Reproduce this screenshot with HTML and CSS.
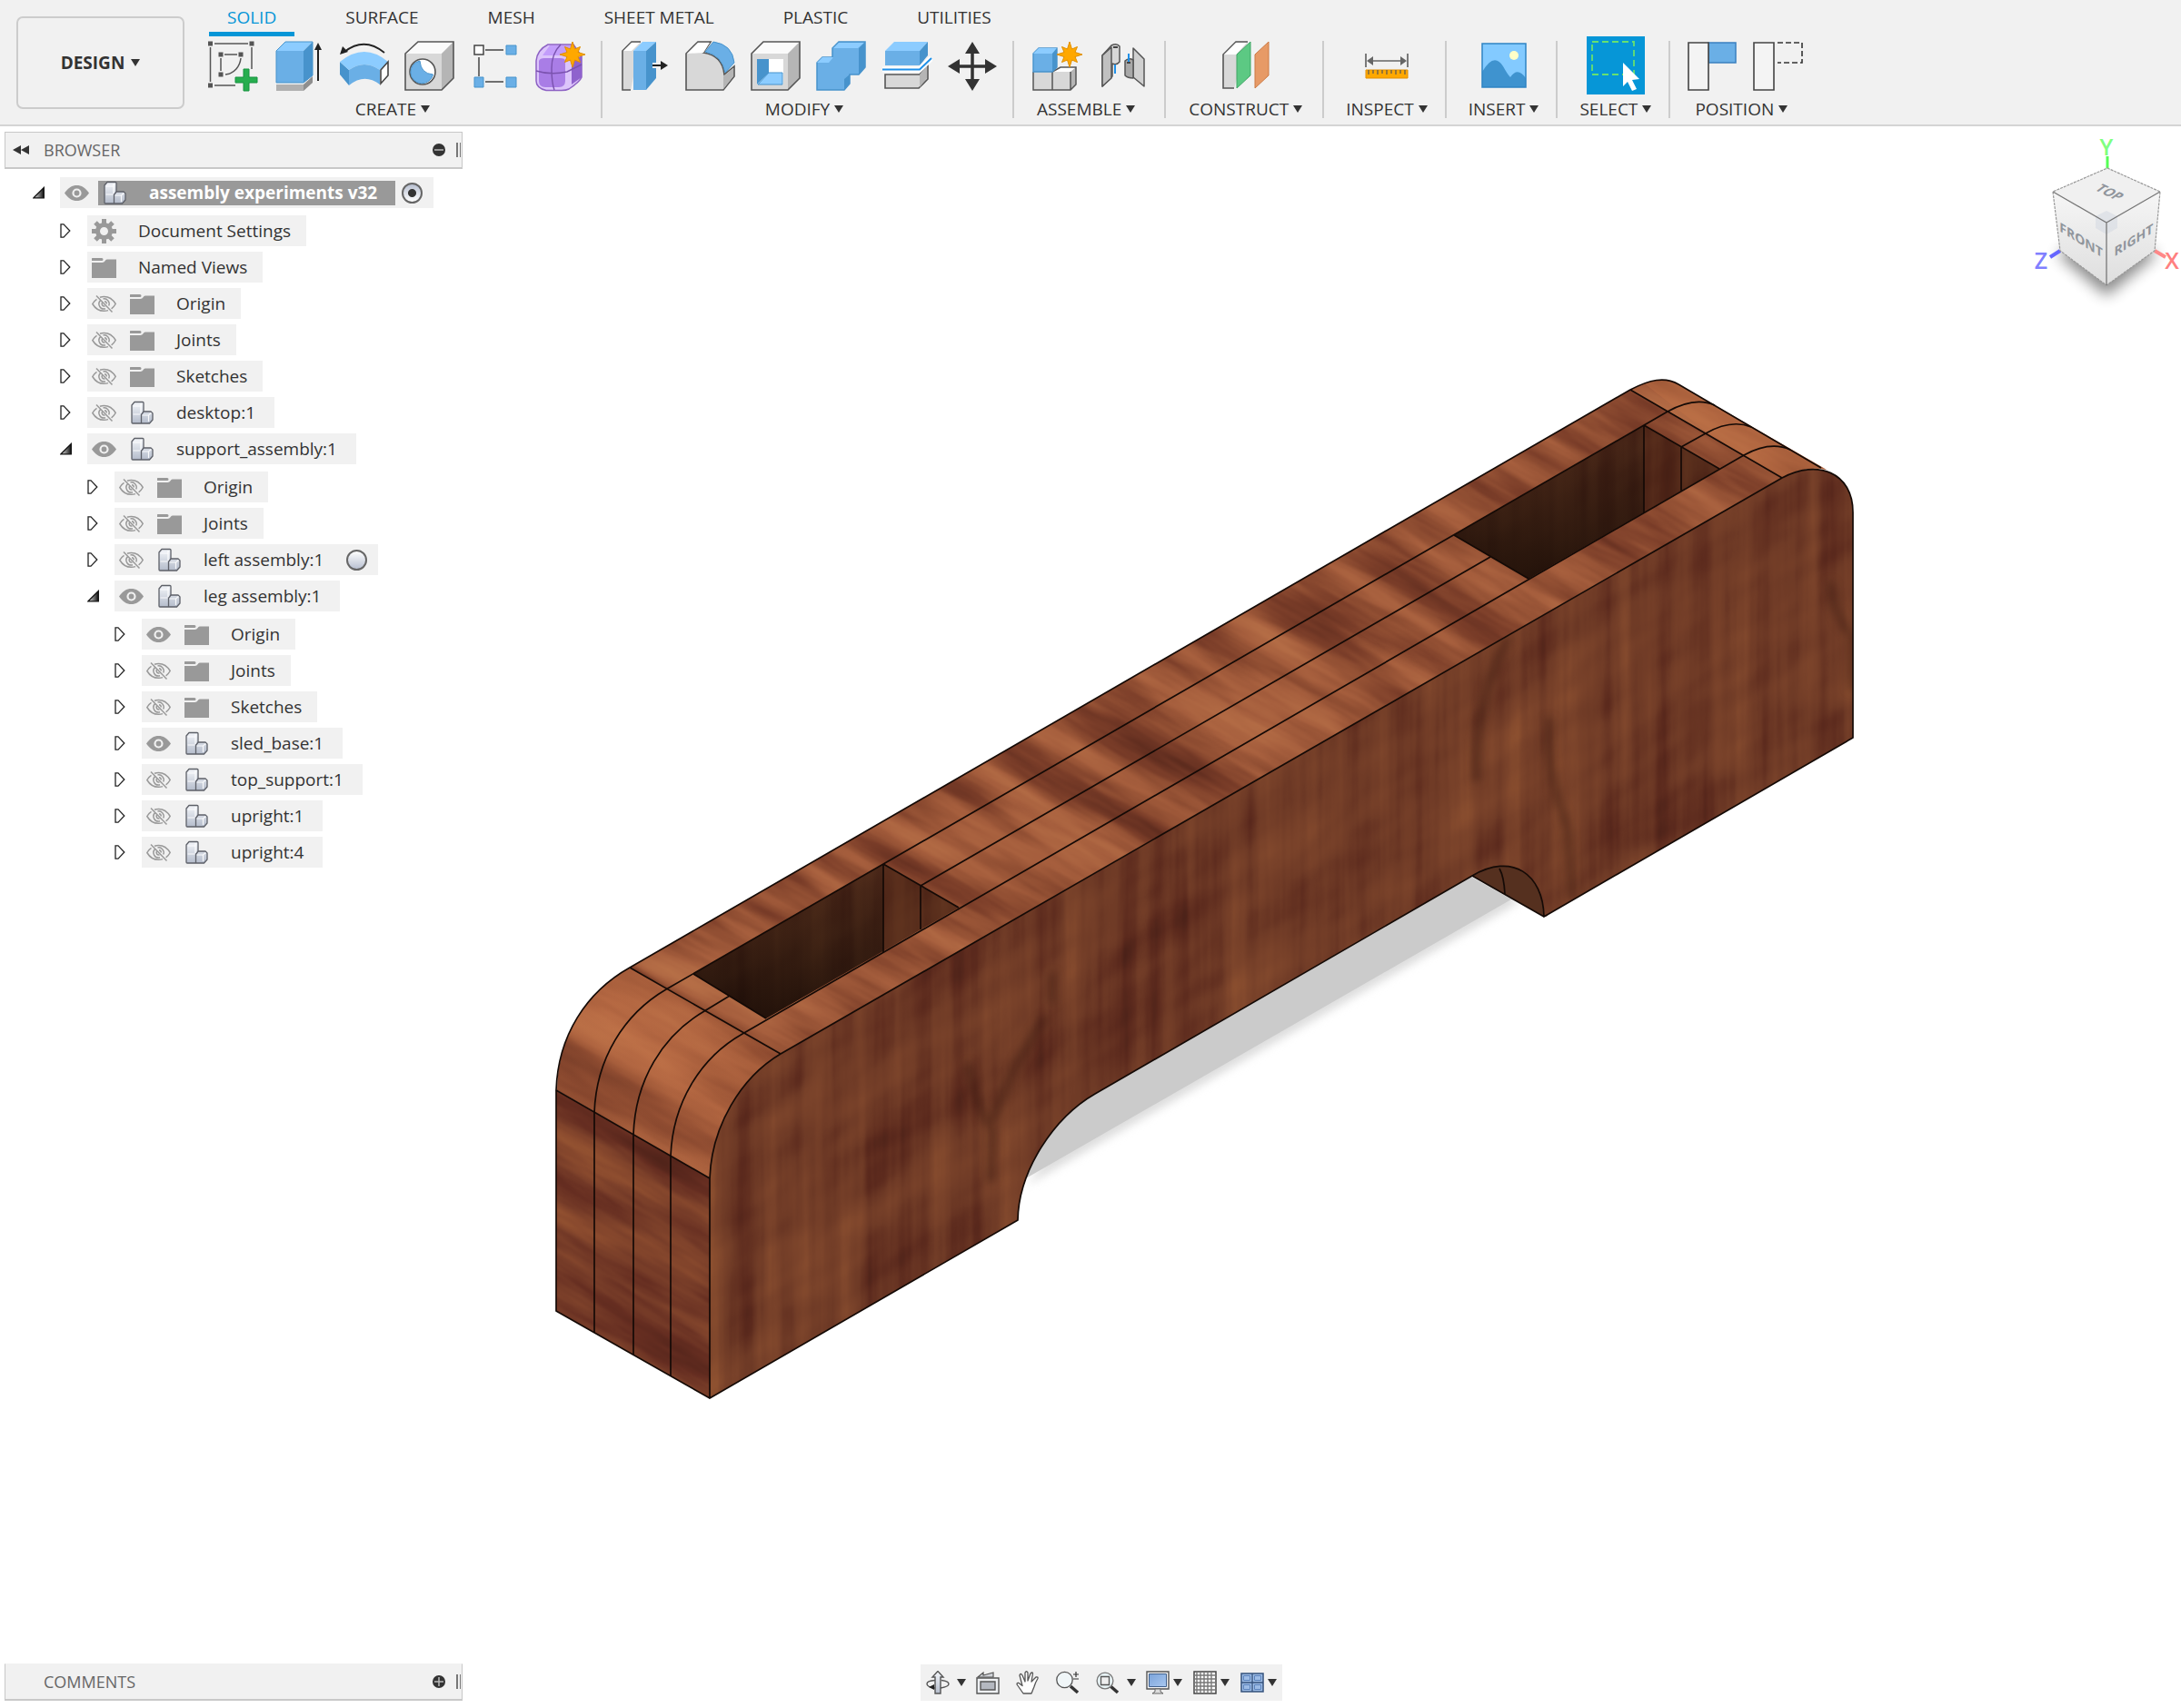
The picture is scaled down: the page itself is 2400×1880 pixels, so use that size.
FILE: index.html
```html
<!DOCTYPE html>
<html lang="en">
<head>
<meta charset="utf-8">
<title>assembly experiments v32</title>
<link rel="stylesheet" href="styles.css">
</head>
<body>
<svg class="defs" aria-hidden="true">
  <defs>
    <linearGradient id="steel" x1="0" y1="0" x2="0" y2="1"><stop offset="0" stop-color="#f4f6fa"/><stop offset="1" stop-color="#b4bccb"/></linearGradient>
    <linearGradient id="ink" x1="0" y1="0" x2="1" y2="0"><stop offset="0" stop-color="#eee"/><stop offset="1" stop-color="#111"/></linearGradient>
    <linearGradient id="sky" x1="0" y1="0" x2="1" y2="1"><stop offset="0" stop-color="#7ba3da"/><stop offset="1" stop-color="#a9c8f0"/></linearGradient>
    <symbol id="eye" viewBox="0 0 27 27"><path d="M0 13.500C4 7.500 8.500 5 13.500 5s9.500 2.500 13.500 8.500c-4 6-8.500 8.500-13.500 8.500S4 19.500 0 13.500z" fill="#999"/><circle cx="13.500" cy="13.500" r="4" fill="none" stroke="#f0f0f0" stroke-width="2.200"/></symbol>
    <symbol id="eye-off" viewBox="0 0 27 27"><g fill="none" stroke="#999" stroke-width="1.500"><path d="M5.500 8.300C3.500 9.600 2 11.400.800 13.500 4 19 8.500 21.300 13.500 21.300q2.400 0 4.500-.700M9 6.300q2.200-.900 4.500-.900c5 0 9.500 2.600 12.700 8.100q-1.900 3.400-4.600 5.300"/><path d="M9.600 9.600a5.500 5.500 0 0 0 5.400 9.200M12.500 8a5.500 5.500 0 0 1 6.200 7.500M11.500 12a2.700 2.700 0 0 0 3 4M14 10.800a2.700 2.700 0 0 1 2.300 2.600"/><path d="M5 4.500l17.500 18"/></g></symbol>
    <symbol id="folder" viewBox="0 0 27 27"><path d="M0 3.500q0-.500.500-.500H11q1.500 0 1.500 1.500T11 6H0zM0 8h11.500q2 0 3-1.800T17 4.500h10V25H0z" fill="#999"/></symbol>
    <symbol id="part" viewBox="0 0 27 27"><g stroke="#5d6068" stroke-width="1.300" stroke-linejoin="round" fill="url(#steel)"><path d="M2 5l3-3.500h9q1 0 1 1V12h8l2 2v7l-3.500 4H3q-1 0-1-1z"/><path d="M12.500 25V15.500L15 12" fill="none"/></g><path d="M3.500 6h8.500V3M3.500 15h8M20.500 16v7M13.500 16h7l3-2.500M12 6v8" fill="none" stroke="#fff" stroke-width="1.200" opacity=".9"/></symbol>
    <symbol id="gear" viewBox="0 0 27 27"><circle cx="13.500" cy="13.500" r="7" fill="none" stroke="#999" stroke-width="5"/><path d="M13.500 0v6M13.500 21v6M0 13.500h6M21 13.500h6M4 4l4.500 4.500M18.500 18.500L23 23M4 23l4.500-4.500M18.500 8.500L23 4" stroke="#999" stroke-width="5"/></symbol>
    <symbol id="closed" viewBox="0 0 14 16"><path d="M1 .800h3l6.800 7.200L4 15.200H1z" fill="#fff" stroke="#222" stroke-width="1.300"/></symbol>
    <symbol id="open" viewBox="0 0 14 14"><path d="M1 12.800L12.300 1.500v11.300z" fill="url(#ink)" stroke="#111" stroke-width="1.300"/></symbol>
    <symbol id="caret" viewBox="0 0 10 8"><path d="M0 0h10L5 8z" fill="#333"/></symbol>
    <symbol id="spark" viewBox="-14 -14 28 28"><path d="M0-14L2.500-6 8.500-8.500 6-2.500 14 0 6 2.500 8.500 8.500 2.500 6 0 14-2.500 6-8.500 8.500-6 2.500-14 0-6-2.500-8.500-8.500-2.500-6z" fill="#ffa800" stroke="#e08f00"/></symbol>
  </defs>
</svg>

<header class="toolbar">
  <button class="workspace">DESIGN <svg class="caret"><use href="#caret"/></svg></button>
  <div class="ribbon">
    <nav class="tabs" aria-label="Tool tabs">
      <a class="tab active" href="#solid">SOLID</a>
      <a class="tab" href="#surface">SURFACE</a>
      <a class="tab" href="#mesh">MESH</a>
      <a class="tab" href="#sheet">SHEET METAL</a>
      <a class="tab" href="#plastic">PLASTIC</a>
      <a class="tab" href="#utilities">UTILITIES</a>
    </nav>
    <div class="groups">
      <section class="group wide">
        <div class="tools">
          <button class="tool" aria-label="Create Sketch"><svg viewBox="0 0 56 56"><path d="M7 3h37M48 7v24M2.500 7v38M7 49h23M18 15h14M14 19v14M36 19C35 28 29 36 19 37" fill="none" stroke="#555" stroke-width="1.500"/><path d="M0 .500h5v5H0zM45.500.500h5v5h-5zM0 46.500h5v5H0zM11.500 12.500h5v5h-5zM33.500 12.500h5v5h-5zM11.500 34.500h5v5h-5z" fill="#555"/><path d="M39 31h6v9h9v6h-9v9h-6v-9h-9v-6h9z" fill="#27ae4f" stroke="#169241"/></svg></button>
          <button class="tool" aria-label="Extrude"><svg viewBox="0 0 56 56"><path d="M3 48h30v7H3z" fill="#b0b0b0"/><path d="M33 48l10-9v7l-10 9z" fill="#8e8e8e"/><path d="M3 11h30v35H3z" fill="#6aafe6"/><path d="M3 11L13 1h30L33 11z" fill="#8cccff"/><path d="M33 11L43 1v37l-10 8z" fill="#4793cc"/><path d="M3 11L13 1h30v37l-10 8H3z" fill="none" stroke="#4793cc"/><path d="M49 8v36" stroke="#222" stroke-width="2"/><path d="M49 2l4 8h-8z" fill="#222"/></svg></button>
          <button class="tool" aria-label="Revolve"><svg viewBox="0 0 56 56"><path d="M1 23l10 9v17L1 37z" fill="#4793cc"/><path d="M1 23Q28 1 54 23l-9 9Q28 20 11 32z" fill="#8cccff"/><path d="M11 32Q28 20 45 32v16Q28 35 11 49z" fill="#6aafe6"/><path d="M46 32l8-9v15l-8 9z" fill="#fff" stroke="#444" stroke-width="1.600"/><path d="M50 13Q28-5 6 12" fill="none" stroke="#222" stroke-width="1.800"/><path d="M1 15l3-9 6 6z" fill="#222"/></svg></button>
          <button class="tool" aria-label="Hole"><svg viewBox="0 0 56 56"><path d="M1 14h40v40H1z" fill="#d8d8d8"/><path d="M1 14L15 1h39L41 14z" fill="#fafafa"/><path d="M41 14L54 1v40L41 54z" fill="#b5b5b5"/><path d="M1 14L15 1h39v40L41 54H1z" fill="none" stroke="#555" stroke-width="1.600"/><circle cx="20" cy="34" r="14" fill="#fff" stroke="#555" stroke-width="1.600"/><path d="M17 22a12.500 12.500 0 1 0 14.500 15Q18 36 17 22z" fill="#6aafe6" stroke="#4793cc"/></svg></button>
          <button class="tool" aria-label="Rectangular Pattern"><svg viewBox="0 0 56 56"><path d="M17 10h20M10 18v21M17 45h20" stroke="#444" stroke-width="1.500"/><path d="M5 5h10v10H5z" fill="#fff" stroke="#444" stroke-width="1.500"/><path d="M40 5h11v10H40zM5 40h10v11H5zM40 40h11v11H40z" fill="#6aafe6" stroke="#4793cc"/></svg></button>
          <button class="tool" aria-label="Create Form"><svg viewBox="0 0 56 56"><path d="M1 22Q2 10 14 4h28l9 13v23q-2 5-14 13-3 1.500-8 1.500H12Q1 52 1 44z" fill="#dcc4fb" stroke="#8d62c4" stroke-width="1.500"/><path d="M4 22q1-3 6-3h17q6 0 6 3v22q0 7-7 7H11q-7 0-7-7z" fill="#a97de6"/><path d="M16 5h24l-7 11H8z" fill="#c39dfb"/><path d="M40 24l11-8v24l-11 8z" fill="#8f62cd"/><path d="M1 33q16 5 34 1l16-8M28 4Q18 14 18 30t3 24" fill="none" stroke="#7a52ae" stroke-width="1.400"/><use href="#spark" x="27" y="1" width="28" height="28"/></svg></button>
        </div>
        <button class="label">CREATE <svg class="caret"><use href="#caret"/></svg></button>
      </section>
      <section class="group wide">
        <div class="tools">
          <button class="tool" aria-label="Press Pull"><svg viewBox="0 0 56 56"><path d="M12 54H3V11L13 1h10" fill="#dadada" stroke="#555" stroke-width="1.600"/><path d="M4 11L13 2h9L13 11z" fill="#fff"/><path d="M15 11h14v43H15z" fill="#6aafe6"/><path d="M15 11L25 1h15L29 11z" fill="#8cccff"/><path d="M29 11L40 1v40L29 54z" fill="#4793cc"/><path d="M36 27h10" stroke="#f0f0f0" stroke-width="6"/><path d="M36 27h10" stroke="#222" stroke-width="2"/><path d="M45 22l8 5-8 5z" fill="#222"/></svg></button>
          <button class="tool" aria-label="Fillet"><svg viewBox="0 0 56 56"><path d="M1 14L14 1h14l-8 12Q41 16 43 37l11-9v11L42 54H1z" fill="#d8d8d8" stroke="#555" stroke-width="1.600"/><path d="M2 14L14 2h13l-7 11z" fill="#fff"/><path d="M42 39l11-9v9L42 53z" fill="#b5b5b5"/><path d="M22 12L31 1Q52 4 54 24L44 35Q41 16 22 12z" fill="#6aafe6" stroke="#4793cc"/></svg></button>
          <button class="tool" aria-label="Shell"><svg viewBox="0 0 56 56"><path d="M1 14h40v40H1z" fill="#d8d8d8"/><path d="M1 14L14 1h40L41 14z" fill="#fafafa"/><path d="M41 14L54 1v40L41 54z" fill="#b5b5b5"/><path d="M1 14L14 1h40v40L41 54H1z" fill="none" stroke="#555" stroke-width="1.600"/><path d="M7 20h29v28H7z" fill="#fff"/><path d="M7 20h13v15L7 48z" fill="#4793cc"/><path d="M8 48l12-13h15v13z" fill="#8cccff" stroke="#4793cc"/></svg></button>
          <button class="tool" aria-label="Combine"><svg viewBox="0 0 56 56"><path d="M1 24l6-6h11V8l7-7h29v28l-7 8H37v10l-6 7H1z" fill="#6aafe6" stroke="#4793cc" stroke-width="1.500"/><path d="M1 24l6-6h12l-5 6zM19 8l6-6h28l-7 6z" fill="#8cccff"/><path d="M47 8l7-7v28l-7 8zM31 42l6-5v10l-6 7z" fill="#4793cc"/></svg></button>
          <button class="tool" aria-label="Split Body"><svg viewBox="0 0 56 56"><path d="M4 37h38l9-11v16L41 52H4z" fill="#d8d8d8" stroke="#555" stroke-width="1.600"/><path d="M42 37l8-10v14l-8 10z" fill="#b5b5b5"/><path d="M4 11h38v16H4z" fill="#6aafe6"/><path d="M4 11L14 1h37l-9 10z" fill="#8cccff"/><path d="M42 11l9-10v15l-9 11z" fill="#4793cc"/><path d="M1 31.500h41L55 19" fill="none" stroke="#fff" stroke-width="6"/><path d="M1 31.500h41L55 19" fill="none" stroke="#1e90e8" stroke-width="2"/></svg></button>
          <button class="tool" aria-label="Move"><svg viewBox="0 0 56 56"><path d="M28 8v40M8 28h40" stroke="#333" stroke-width="3.500"/><path d="M28 1l8 13H20zM28 55l8-13H20zM1 28l13-8v16zM55 28l-13-8v16z" fill="#333"/></svg></button>
        </div>
        <button class="label">MODIFY <svg class="caret"><use href="#caret"/></svg></button>
      </section>
      <section class="group wide">
        <div class="tools">
          <button class="tool" aria-label="New Component"><svg viewBox="0 0 56 56"><path d="M1 34h21v20H1zM22 34h20v20H22z" fill="#d8d8d8"/><path d="M22 34l8-5h18l-6 5z" fill="#fff"/><path d="M42 34l6-5v19l-6 6z" fill="#b5b5b5"/><path d="M1 34v20h41l6-6V29H31L22 34v20M42 34v20" fill="none" stroke="#555" stroke-width="1.500"/><path d="M1 14l6-6h20v21l-5 5H1z" fill="#6aafe6" stroke="#4793cc" stroke-width="1.400"/><path d="M1 14l6-6h20l-5 6z" fill="#8cccff"/><path d="M22 14l5-6v21l-5 5z" fill="#4793cc"/><use href="#spark" x="27" y="1" width="28" height="28"/></svg></button>
          <button class="tool" aria-label="Joint"><svg viewBox="0 0 56 56"><g stroke="#555" stroke-width="1.500" stroke-linejoin="round"><path d="M5 16L15 5q6-3 9 1v17q-3 4-8 2v14L5 50z" fill="#d8d8d8"/><path d="M5 16L15 7v34L5 50z" fill="#c0c0c0"/><path d="M39 8l12 12v30L39 40z" fill="#d0d0d0"/><path d="M30 22q4-4 9-1v20q-6 0-9-3z" fill="#a8a8a8"/></g><path d="M19 26v10M34 14v10" stroke="#1e90e8" stroke-width="2"/><path d="M17 7h5M32 24h4" stroke="#444" stroke-width="2"/></svg></button>
        </div>
        <button class="label">ASSEMBLE <svg class="caret"><use href="#caret"/></svg></button>
      </section>
      <section class="group">
        <div class="tools">
          <button class="tool" aria-label="Offset Plane"><svg viewBox="0 0 56 56"><path d="M15 52H3V15L17 1h13" fill="#d8d8d8" stroke="#555" stroke-width="1.600"/><path d="M4 15L17 2h12L17 15z" fill="#fff"/><path d="M18 15L33 1v37L18 52z" fill="#5cc983" stroke="#3fa565"/><path d="M38 15L53 1v37L38 52z" fill="#e79a66" stroke="#cc7a45"/></svg></button>
        </div>
        <button class="label">CONSTRUCT <svg class="caret"><use href="#caret"/></svg></button>
      </section>
      <section class="group compact">
        <div class="tools">
          <button class="tool" aria-label="Measure"><svg viewBox="0 0 56 56"><path d="M5 14v15M51 14v15M8 22h40" stroke="#666" stroke-width="1.700"/><path d="M6 22l7-5v10zM50 22l-7-5v10z" fill="#666"/><path d="M5 32h46v9H5z" fill="#ffa800" stroke="#e08f00"/><path d="M8 32v5M13 32v4M18 32v5M23 32v4M28 32v5M33 32v4M38 32v5M43 32v4M48 32v5" stroke="#555" stroke-width="1.200"/></svg></button>
        </div>
        <button class="label">INSPECT <svg class="caret"><use href="#caret"/></svg></button>
      </section>
      <section class="group compact">
        <div class="tools">
          <button class="tool" aria-label="Insert Image"><svg viewBox="0 0 56 56"><path d="M4 3h48v48H4z" fill="#83caff"/><path d="M4 34Q17 12 27 28q5 9 8 12 8-12 17 1v10H4z" fill="#3f93cf"/><path d="M4 3h48v48H4z" fill="none" stroke="#2f84c4" stroke-width="1.500"/><circle cx="39" cy="16" r="5" fill="#ffffc8"/></svg></button>
        </div>
        <button class="label">INSERT <svg class="caret"><use href="#caret"/></svg></button>
      </section>
      <section class="group compact">
        <div class="tools">
          <button class="tool selected" aria-label="Select"><svg viewBox="0 0 64 64"><path d="M6 6h46v36H6z" fill="none" stroke="#66e070" stroke-width="1.800" stroke-dasharray="7 4"/><path d="M40 29l18 18-8 1 5 10-5 2-5-10-5 5z" fill="#fff"/></svg></button>
        </div>
        <button class="label">SELECT <svg class="caret"><use href="#caret"/></svg></button>
      </section>
      <section class="group wide">
        <div class="tools">
          <button class="tool" aria-label="Capture Position"><svg viewBox="0 0 56 56"><path d="M23 2h30v22H23z" fill="#6aafe6" stroke="#3a80c0" stroke-width="1.500"/><path d="M1 2h22v52H1z" fill="#f4f4f4" stroke="#444" stroke-width="1.600"/></svg></button>
          <button class="tool" aria-label="Revert Position"><svg viewBox="0 0 56 56"><path d="M27 2h27v22H27" fill="none" stroke="#333" stroke-width="1.600" stroke-dasharray="6 3"/><path d="M1 2h22v52H1z" fill="#f4f4f4" stroke="#444" stroke-width="1.600"/></svg></button>
        </div>
        <button class="label">POSITION <svg class="caret"><use href="#caret"/></svg></button>
      </section>
    </div>
  </div>
</header>

<main class="viewport">
  <svg class="model" viewBox="0 139 2400 1741" aria-label="sled_base model">
    <defs>
      <filter id="woodFront" x="0" y="0" width="1" height="1" color-interpolation-filters="sRGB">
        <feTurbulence type="fractalNoise" baseFrequency="0.034 0.0014" numOctaves="4" seed="8" result="a"/>
        <feColorMatrix in="a" values="1 0 0 0 0 1 0 0 0 0 1 0 0 0 0 0 0 0 0 1" result="aa"/>
        <feTurbulence type="fractalNoise" baseFrequency="0.007 0.014" numOctaves="3" seed="21" result="b"/>
        <feColorMatrix in="b" values="1 0 0 0 0 1 0 0 0 0 1 0 0 0 0 0 0 0 0 1" result="bb"/>
        <feComposite in="aa" in2="bb" operator="arithmetic" k2=".62" k3=".5" k4="-.04"/>
        <feComponentTransfer><feFuncR type="table" tableValues=".20 .27 .36 .435 .49 .56 .62"/><feFuncG type="table" tableValues=".10 .12 .165 .23 .27 .32 .36"/><feFuncB type="table" tableValues=".07 .09 .115 .15 .17 .19 .21"/></feComponentTransfer>
      </filter>
      <filter id="woodTop" x="0" y="0" width="1" height="1" color-interpolation-filters="sRGB">
        <feTurbulence type="fractalNoise" baseFrequency="0.024 0.004" numOctaves="4" seed="5"/>
        <feColorMatrix values="1 0 0 0 0 1 0 0 0 0 1 0 0 0 0 0 0 0 0 1"/>
        <feComponentTransfer><feFuncR type="table" tableValues=".32 .40 .48 .57 .65 .70 .74"/><feFuncG type="table" tableValues=".15 .19 .24 .31 .37 .42 .46"/><feFuncB type="table" tableValues=".10 .13 .16 .20 .24 .27 .29"/></feComponentTransfer>
      </filter>
      <filter id="woodEnd" x="0" y="0" width="1" height="1" color-interpolation-filters="sRGB">
        <feTurbulence type="fractalNoise" baseFrequency="0.005 0.024" numOctaves="4" seed="14"/>
        <feColorMatrix values="1 0 0 0 0 1 0 0 0 0 1 0 0 0 0 0 0 0 0 1"/>
        <feComponentTransfer><feFuncR type="table" tableValues=".28 .34 .40 .47 .54 .60 .66"/><feFuncG type="table" tableValues=".13 .15 .18 .24 .29 .34 .38"/><feFuncB type="table" tableValues=".09 .11 .13 .16 .18 .20 .23"/></feComponentTransfer>
      </filter>
      <filter id="soft" x="-.5" y="-.5" width="2" height="2" color-interpolation-filters="sRGB"><feGaussianBlur stdDeviation="5"/></filter>
      <clipPath id="front"><path d="M781 1539V1297C783 1240 815 1186 859 1160L1961 526C2000 505 2039 520 2039 564V812L1699 1009C1698 962 1664 938 1620 964L1205 1204C1160 1230 1121 1288 1120 1343z"/></clipPath>
      <clipPath id="top"><path d="M693 1065L1794 429 1961 526 859 1160z"/></clipPath>
      <clipPath id="round"><path d="M613 1200C614 1140 645 1092 693 1065L859 1160C815 1186 783 1240 781 1297z"/></clipPath>
      <clipPath id="end"><path d="M612 1200L781 1297V1539L612 1443z"/></clipPath>
      <clipPath id="farRound"><path d="M1794 429C1815 418 1832 414 1847 423L2010 517Q1985 512 1961 526z"/></clipPath>
      <clipPath id="pocketA"><path d="M763 1072L972 951 1055 999 843 1121z"/></clipPath>
      <clipPath id="pocketB"><path d="M1600 589L1809 468 1892 516 1682 637z"/></clipPath>
      <linearGradient id="roundShade" x1="0" y1="1" x2="1" y2="0"><stop offset="0" stop-color="#6f3822" stop-opacity=".3"/><stop offset=".5" stop-color="#d07a4c" stop-opacity=".38"/><stop offset="1" stop-color="#b06038" stop-opacity=".15"/></linearGradient>
      <linearGradient id="deep" x1="0" y1="0" x2="0" y2="1"><stop offset="0" stop-color="#1c1108" stop-opacity=".35"/><stop offset=".75" stop-color="#150b05" stop-opacity=".78"/><stop offset="1" stop-color="#100602" stop-opacity=".88"/></linearGradient>
    </defs>
    <path d="M1131 1304L1672 993 1640 970 1200 1204z" fill="#ddd" filter="url(#soft)"/>
    <path d="M1115 1305L1663 990 1610 960 1190 1200z" fill="#cbcbcb"/>
    <path d="M1620 964Q1665 915 1704 960L1703 1008 1699 1009z" fill="#55301f"/>

    <g clip-path="url(#front)">
      <rect x="760" y="940" width="1300" height="1120" transform="skewY(-30)" filter="url(#woodFront)"/>
      <g fill="none" stroke="#3a1a10" stroke-opacity=".55" stroke-width="7" filter="url(#soft)">
        <path d="M1065 1170Q1075 1220 1092 1245L1090 1300M1092 1235Q1110 1180 1150 1120"/>
        <path d="M1705 790Q1700 850 1725 910L1730 990M1660 700Q1620 780 1625 860"/>
        <path d="M2014 640Q2018 680 2038 700V760M1158 1070V1105"/>
      </g>
    </g>
    <g clip-path="url(#top)"><rect x="-200" y="-20" width="1800" height="280" transform="matrix(.866 -.5 .866 .5 693 1060)" filter="url(#woodTop)"/></g>
    <g clip-path="url(#farRound)"><rect x="-50" y="-100" width="400" height="500" transform="matrix(.866 -.5 .866 .5 1780 440)" filter="url(#woodTop)"/><path d="M1794 410h230v130h-63z" fill="#c27245" opacity=".4"/></g>
    <g clip-path="url(#round)"><rect x="-200" y="0" width="600" height="500" transform="matrix(.7 -.72 .866 .5 593 1120)" filter="url(#woodTop)"/><path d="M600 1050h270v260H600z" fill="url(#roundShade)"/></g>
    <g clip-path="url(#end)"><rect x="600" y="820" width="190" height="300" transform="skewY(30)" filter="url(#woodEnd)"/></g>

    <g clip-path="url(#pocketA)">
      <rect x="740" y="1360" width="340" height="300" transform="skewY(-30)" filter="url(#woodFront)"/>
      <path d="M740 930h232v220H740z" fill="url(#deep)"/><path d="M972 940h90v90l-90 50z" fill="#2b130a" fill-opacity=".35"/>
    </g>
    <g clip-path="url(#pocketB)">
      <rect x="1580" y="1360" width="340" height="300" transform="skewY(-30)" filter="url(#woodFront)"/>
      <path d="M1580 450h229v215H1580z" fill="url(#deep)"/><path d="M1809 455h90v90l-90 50z" fill="#2b130a" fill-opacity=".35"/>
    </g>

    <g fill="none" stroke="#140a06" stroke-width="1.700" stroke-linejoin="round">
      <path d="M781 1539V1297C783 1240 815 1186 859 1160L1961 526C2000 505 2039 520 2039 564V812L1699 1009C1698 962 1664 938 1620 964L1205 1204C1160 1230 1121 1288 1120 1343z"/>
      <path d="M781 1539L612 1443V1200C614 1140 645 1092 693 1065L1794 429C1815 418 1832 414 1847 423L2004 515"/>
      <path d="M612 1200L781 1297M693 1065L859 1160M1794 429L1961 526"/>
      <path d="M654 1467V1225C656 1165 687 1116 733 1089L1835 453Q1865 436 1887 446"/>
      <path d="M697 1491V1249C699 1189 729 1140 775 1113L803 1096M1013 975L1640 613M1850 492L1877 477Q1905 461 1927 470"/>
      <path d="M738 1515V1273C740 1214 771 1164 817 1138L1919 501Q1948 485 1970 495"/>
      <path d="M763 1072L843 1121M972 951L1055 999M972 951V1048M1013 975V1023"/>
      <path d="M1600 589L1682 637M1809 468L1892 516M1809 468V565M1850 492V540"/>
      <path d="M1620 964L1699 1009M1650 956Q1655 965 1656 984"/>
    </g>
  </svg>

  <aside class="side">
    <div class="panel-head">
      <button class="collapse" aria-label="Collapse browser"><svg viewBox="0 0 18 10"><path d="M9 0v10L0 5zM18 0v10L9 5z" fill="#333"/></svg></button>
      <h2>BROWSER</h2>
      <button class="dot" aria-label="Minimize browser"><svg viewBox="0 0 14 14"><circle cx="7" cy="7" r="7" fill="#333"/><path d="M2 7h10" stroke="#bbb" stroke-width="1.500"/></svg></button>
      <span class="grip"></span>
    </div>
    <ul class="tree">
      <li>
        <div class="row"><button class="toggle" aria-label="Collapse"><svg class="expanded"><use href="#open"/></svg></button>
          <div class="chip root"><button class="eye" aria-label="Hide"><svg><use href="#eye"/></svg></button><span class="picked"><svg><use href="#part"/></svg><span class="name">assembly experiments v32</span></span><input type="radio" name="active" aria-label="Activate assembly experiments v32" checked></div></div>
        <ul>
          <li><div class="row"><button class="toggle" aria-label="Expand"><svg><use href="#closed"/></svg></button><div class="chip"><svg><use href="#gear"/></svg><span class="name">Document Settings</span></div></div></li>
          <li><div class="row"><button class="toggle" aria-label="Expand"><svg><use href="#closed"/></svg></button><div class="chip"><svg><use href="#folder"/></svg><span class="name">Named Views</span></div></div></li>
          <li><div class="row"><button class="toggle" aria-label="Expand"><svg><use href="#closed"/></svg></button><div class="chip"><button class="eye" aria-label="Show"><svg><use href="#eye-off"/></svg></button><svg><use href="#folder"/></svg><span class="name">Origin</span></div></div></li>
          <li><div class="row"><button class="toggle" aria-label="Expand"><svg><use href="#closed"/></svg></button><div class="chip"><button class="eye" aria-label="Show"><svg><use href="#eye-off"/></svg></button><svg><use href="#folder"/></svg><span class="name">Joints</span></div></div></li>
          <li><div class="row"><button class="toggle" aria-label="Expand"><svg><use href="#closed"/></svg></button><div class="chip"><button class="eye" aria-label="Show"><svg><use href="#eye-off"/></svg></button><svg><use href="#folder"/></svg><span class="name">Sketches</span></div></div></li>
          <li><div class="row"><button class="toggle" aria-label="Expand"><svg><use href="#closed"/></svg></button><div class="chip part"><button class="eye" aria-label="Show"><svg><use href="#eye-off"/></svg></button><svg><use href="#part"/></svg><span class="name">desktop:1</span></div></div></li>
          <li>
            <div class="row"><button class="toggle" aria-label="Collapse"><svg class="expanded"><use href="#open"/></svg></button><div class="chip part"><button class="eye" aria-label="Hide"><svg><use href="#eye"/></svg></button><svg><use href="#part"/></svg><span class="name">support_assembly:1</span></div></div>
            <ul>
              <li><div class="row"><button class="toggle" aria-label="Expand"><svg><use href="#closed"/></svg></button><div class="chip"><button class="eye" aria-label="Show"><svg><use href="#eye-off"/></svg></button><svg><use href="#folder"/></svg><span class="name">Origin</span></div></div></li>
              <li><div class="row"><button class="toggle" aria-label="Expand"><svg><use href="#closed"/></svg></button><div class="chip"><button class="eye" aria-label="Show"><svg><use href="#eye-off"/></svg></button><svg><use href="#folder"/></svg><span class="name">Joints</span></div></div></li>
              <li><div class="row"><button class="toggle" aria-label="Expand"><svg><use href="#closed"/></svg></button><div class="chip activatable"><button class="eye" aria-label="Show"><svg><use href="#eye-off"/></svg></button><svg><use href="#part"/></svg><span class="name">left assembly:1</span><input type="radio" name="active" aria-label="Activate left assembly:1"></div></div></li>
              <li>
                <div class="row"><button class="toggle" aria-label="Collapse"><svg class="expanded"><use href="#open"/></svg></button><div class="chip part"><button class="eye" aria-label="Hide"><svg><use href="#eye"/></svg></button><svg><use href="#part"/></svg><span class="name">leg assembly:1</span></div></div>
                <ul>
                  <li><div class="row"><button class="toggle" aria-label="Expand"><svg><use href="#closed"/></svg></button><div class="chip"><button class="eye" aria-label="Hide"><svg><use href="#eye"/></svg></button><svg><use href="#folder"/></svg><span class="name">Origin</span></div></div></li>
                  <li><div class="row"><button class="toggle" aria-label="Expand"><svg><use href="#closed"/></svg></button><div class="chip"><button class="eye" aria-label="Show"><svg><use href="#eye-off"/></svg></button><svg><use href="#folder"/></svg><span class="name">Joints</span></div></div></li>
                  <li><div class="row"><button class="toggle" aria-label="Expand"><svg><use href="#closed"/></svg></button><div class="chip"><button class="eye" aria-label="Show"><svg><use href="#eye-off"/></svg></button><svg><use href="#folder"/></svg><span class="name">Sketches</span></div></div></li>
                  <li><div class="row"><button class="toggle" aria-label="Expand"><svg><use href="#closed"/></svg></button><div class="chip part"><button class="eye" aria-label="Hide"><svg><use href="#eye"/></svg></button><svg><use href="#part"/></svg><span class="name">sled_base:1</span></div></div></li>
                  <li><div class="row"><button class="toggle" aria-label="Expand"><svg><use href="#closed"/></svg></button><div class="chip part"><button class="eye" aria-label="Show"><svg><use href="#eye-off"/></svg></button><svg><use href="#part"/></svg><span class="name">top_support:1</span></div></div></li>
                  <li><div class="row"><button class="toggle" aria-label="Expand"><svg><use href="#closed"/></svg></button><div class="chip part"><button class="eye" aria-label="Show"><svg><use href="#eye-off"/></svg></button><svg><use href="#part"/></svg><span class="name">upright:1</span></div></div></li>
                  <li><div class="row"><button class="toggle" aria-label="Expand"><svg><use href="#closed"/></svg></button><div class="chip part"><button class="eye" aria-label="Show"><svg><use href="#eye-off"/></svg></button><svg><use href="#part"/></svg><span class="name">upright:4</span></div></div></li>
                </ul>
              </li>
            </ul>
          </li>
        </ul>
      </li>
    </ul>
  </aside>

  <svg class="cube" viewBox="2230 140 170 210" aria-label="View cube">
    <defs>
      <filter id="cubeShadow" x="-.5" y="-.5" width="2" height="2"><feGaussianBlur stdDeviation="8"/></filter>
      <linearGradient id="cubeSide" x1="0" y1="0" x2="0" y2="1"><stop offset="0" stop-color="#f6f6f6"/><stop offset="1" stop-color="#dedede"/></linearGradient>
    </defs>
    <path d="M2264 280L2318 250 2374 280 2318 326z" fill="#000" opacity=".45" filter="url(#cubeShadow)"/>
    <path d="M2319 172v14" stroke="#5f5" stroke-width="3"/><path d="M2267 276l-11 7" stroke="#66f" stroke-width="4"/><path d="M2371 276l12 7" stroke="#f88" stroke-width="4"/>
    <path d="M2259 211L2318 245V314L2267 276z" fill="url(#cubeSide)"/><path d="M2377 211L2318 245V314L2371 276z" fill="url(#cubeSide)"/><path d="M2319 185L2377 211 2318 245 2259 211z" fill="#f0f0f0"/>
    <path d="M2318 232l12 6v13l-12 7-12-7v-13z" fill="#d5dbe3" opacity=".6"/>
    <path d="M2319 185L2377 211 2371 276 2318 314 2267 276 2259 211z" fill="none" stroke="#999" stroke-width="1.200" stroke-dasharray="3 1"/>
    <path d="M2259 211L2318 245 2377 211M2318 245V314" fill="none" stroke="#777" stroke-width="1.300"/>
    <text class="axis y" x="2318" y="171">Y</text><text class="axis z" x="2246" y="296">Z</text><text class="axis x" x="2390" y="296">X</text>
    <text class="face" transform="translate(2317 215) rotate(26) skewX(-28)">TOP</text>
    <text class="face" transform="translate(2290 269) skewY(32)">FRONT</text>
    <text class="face" transform="translate(2348 269) skewY(-32)">RIGHT</text>
  </svg>

  <footer class="bottom">
    <div class="panel-head comments">
      <h2>COMMENTS</h2>
      <button class="dot" aria-label="Expand comments"><svg viewBox="0 0 14 14"><circle cx="7" cy="7" r="7" fill="#333"/><path d="M2 7h10M7 2v10" stroke="#bbb" stroke-width="1.500"/></svg></button>
      <span class="grip"></span>
    </div>
    <div class="navbar" role="toolbar" aria-label="Navigation">
      <button class="nav drop" aria-label="Orbit"><svg viewBox="0 0 26 26"><g fill="none" stroke="#555" stroke-width="1.400"><path d="M10 19Q1 18 1 14.500T10 10.500M17 10.500q8 1 8 4t-9 4.500H7"/><path d="M10 25V7H7l6-6.500L19 7h-3v18z" fill="url(#steel)"/></g><path d="M3 18l6-3v6z" fill="#222"/></svg><svg class="caret"><use href="#caret"/></svg></button>
      <button class="nav" aria-label="Look At"><svg viewBox="0 0 26 26"><path d="M1 8h24v17H1z" fill="#eef0f3" stroke="#555" stroke-width="1.400"/><path d="M5 12h16v9H5z" fill="#b4b8c0" stroke="#555" stroke-width="1.400"/><path d="M2 7l6-5v3l11-3v5z" fill="#d0d3d8" stroke="#555" stroke-width="1.200"/></svg></button>
      <button class="nav" aria-label="Pan"><svg viewBox="0 0 26 26"><path d="M8 25L1 15q0-2 2-1.500l4 3L4 5q1-3 3 0l3 7V2q1.500-2.500 3 0v9l3-8q2-2 2.500 0L17 12l5-5q2.500-.500 2 1.500-3 5-4 9l-3 7.500z" fill="#fff" stroke="#555" stroke-width="1.300" stroke-linejoin="round"/></svg></button>
      <button class="nav" aria-label="Zoom"><svg viewBox="0 0 26 26"><path d="M16 17l8 7" stroke="#333" stroke-width="3.500"/><circle cx="9.500" cy="10" r="8.700" fill="#f0f6f8" stroke="#555" stroke-width="1.300"/><path d="M22 1v6M19 4h6M19 9h6" stroke="#333" stroke-width="1.200"/></svg></button>
      <button class="nav drop" aria-label="Fit"><svg viewBox="0 0 26 26"><path d="M16 17l8 7" stroke="#333" stroke-width="3.500"/><circle cx="10" cy="11" r="8.900" fill="#e8f3f5" stroke="#777" stroke-width="1.300"/><path d="M5.500 6.500h9v9h-9z" fill="#eee" stroke="#555" stroke-width="1.300"/></svg><svg class="caret"><use href="#caret"/></svg></button>
      <button class="nav tight" aria-label="Display Settings"><svg viewBox="0 0 26 26"><path d="M1 1h24v19H1z" fill="#f4f4f4" stroke="#555" stroke-width="1.400"/><path d="M3.500 3.500h19v14h-19z" fill="url(#sky)" stroke="#40608c"/><path d="M10 20h6v3l3 2H7l3-2z" fill="#ddd" stroke="#666"/></svg><svg class="caret"><use href="#caret"/></svg></button>
      <button class="nav tight" aria-label="Grid and Snaps"><svg viewBox="0 0 26 26"><path d="M1 1h24v24H1z" fill="#fff" stroke="#444" stroke-width="1.500"/><path d="M4 1v24M8 1v24M12 1v24M16 1v24M20 1v24M1 5h24M1 9h24M1 13h24M1 17h24M1 21h24" stroke="#777" stroke-width="1.400"/></svg><svg class="caret"><use href="#caret"/></svg></button>
      <button class="nav tight" aria-label="Viewports"><svg viewBox="0 0 26 26"><path d="M1 3h24v20H1z" fill="#9dbce6" stroke="#34517c" stroke-width="1.500"/><path d="M13 3v20M1 13h24" stroke="#34517c" stroke-width="1.300"/><path d="M3.500 5.500h7v5h-7zM15.500 5.500h7v5h-7zM3.500 15.500h7v5h-7zM15.500 15.500h7v5h-7z" fill="none" stroke="#5b82bb"/></svg><svg class="caret"><use href="#caret"/></svg></button>
    </div>
  </footer>
</main>
</body>
</html>
```
FILE: styles.css
```css
* { box-sizing: border-box; }

html, body { height: 100%; }

body {
  margin: 0;
  display: flex;
  flex-direction: column;
  background: #fff;
  color: #333;
  font: 19px/24px "Open Sans", "Noto Sans", sans-serif;
  overflow: hidden;
}

button {
  padding: 0;
  border: 0;
  background: none;
  color: inherit;
  font: inherit;
  cursor: pointer;
}

svg { display: block; flex: none; }
.defs { position: absolute; width: 0; height: 0; }
.caret { width: 10px; height: 8px; }

/* Toolbar */
.toolbar {
  display: flex;
  align-items: flex-start;
  height: 139px;
  padding-left: 18px;
  background: #f1f1f1;
  border-bottom: 2px solid #d4d4d4;
  position: relative;
  z-index: 1;
}

.workspace {
  display: flex;
  align-items: center;
  justify-content: center;
  gap: 7px;
  width: 185px;
  height: 102px;
  margin-top: 18px;
  border: 2px solid #ccc;
  border-radius: 7px;
  font-weight: 700;
}

.ribbon { padding-left: 9px; }
.tabs { display: flex; gap: 36px; padding-left: 18px; }

.tab {
  height: 40px;
  padding: 7px 20px 0;
  color: #333;
  text-decoration: none;
}
.tab.active { color: #0696d7; border-bottom: 5px solid #0696d7; }

.groups { display: flex; padding-top: 5px; }

.group {
  display: flex;
  flex-direction: column;
  align-items: center;
  height: 85px;
  padding: 0 16px 0 19px;
}
.group.compact { padding: 0 13px 0 18px; }
.group:first-child { padding-left: 17px; }
.group + .group { border-left: 2px solid #ccc; }

.tools { display: flex; flex: none; gap: 16px; height: 56px; }
.tool svg { width: 56px; height: 56px; }
.tool.selected { height: 64px; margin: -5px 0; background: #0696d7; }
.tool.selected svg { width: 64px; height: 64px; }

.label {
  display: flex;
  flex: none;
  align-items: center;
  gap: 5px;
  height: 24px;
  margin-top: 7px;
  padding: 0 6px;
}
.wide .label { padding-right: 16px; }

/* Drawing area */
.viewport {
  position: relative;
  flex: 1;
  display: flex;
  flex-direction: column;
  justify-content: space-between;
  padding: 6px 0 8px 5px;
}

.model { position: absolute; left: 0; top: 0; width: 100%; height: auto; }
.cube { position: absolute; right: 0; top: 1px; width: 170px; height: 210px; }
.axis { font-size: 25px; font-weight: 600; text-anchor: middle; }
.axis.x { fill: #ff8080; }
.axis.y { fill: #80ff80; }
.axis.z { fill: #8080ff; }
.face { font-size: 14px; font-weight: 700; fill: #90959c; text-anchor: middle; }

/* Panels */
.side, .bottom { position: relative; }

.panel-head {
  display: flex;
  align-items: center;
  width: 504px;
  height: 41px;
  padding: 0 1px 0 8px;
  background: #f1f1f1;
  border: 1px solid #c8c8c8;
  border-bottom-width: 2px;
}
.panel-head h2 {
  flex: 1;
  margin: 0 0 0 16px;
  color: #666;
  font-size: 18px;
  font-weight: 400;
}
.panel-head.comments { border-top-color: #f1f1f1; }
.comments h2 { margin-left: 34px; }
.collapse svg { width: 18px; height: 10px; }
.dot svg { width: 14px; height: 14px; }
.grip {
  width: 5px;
  height: 16px;
  margin-left: 12px;
  border: solid #777;
  border-width: 0 1px 0 2px;
}

.tree, .tree ul { margin: 0; padding: 0; list-style: none; }
.tree { padding: 9px 0 0 26px; }
.tree ul { padding: 2px 0 0 30px; }

.row { display: flex; align-items: center; height: 34px; margin-bottom: 6px; }

.toggle {
  display: flex;
  width: 35px;
  padding-left: 5px;
}
.toggle svg { width: 14px; height: 16px; }
.toggle .expanded { height: 14px; }

.chip {
  display: flex;
  align-items: center;
  height: 34px;
  padding: 0 17px 0 5px;
  background: #f1f1f1;
}
.chip svg { width: 27px; height: 27px; }
.chip.part { padding-right: 21px; }
.chip.root, .chip.activatable { padding-right: 12px; }
.eye { margin-right: 15px; }
.name { margin-left: 24px; white-space: nowrap; }

.root .eye { margin-right: 10px; }
.picked {
  display: flex;
  align-items: center;
  height: 27px;
  padding: 0 20px 0 5px;
  background: #999;
  color: #fff;
  font-weight: 700;
}

.chip input {
  appearance: none;
  width: 23px;
  height: 23px;
  margin: 0 0 0 25px;
  border: 2px solid #666;
  border-radius: 50%;
  background: linear-gradient(#fff, #b9c1d2);
}
.root input {
  margin-left: 7px;
  background: radial-gradient(circle, #333 4px, transparent 5px), linear-gradient(#b9c1d2, #fff);
}

/* Bottom strip */
.bottom {
  display: grid;
  grid-template-columns: 504px 1fr 485px;
  align-items: end;
}
.navbar {
  display: flex;
  align-items: center;
  justify-self: center;
  gap: 18px;
  height: 40px;
  padding: 0 6px;
  background: #f1f1f1;
}
.nav { display: flex; align-items: center; gap: 8px; }
.nav svg { width: 26px; height: 26px; }
.nav .caret { width: 10px; height: 8px; }
.nav.drop { margin-right: -7px; }
.nav.tight { gap: 4px; margin-right: -6px; }
.nav.tight:last-child { margin-right: 0; }
```
